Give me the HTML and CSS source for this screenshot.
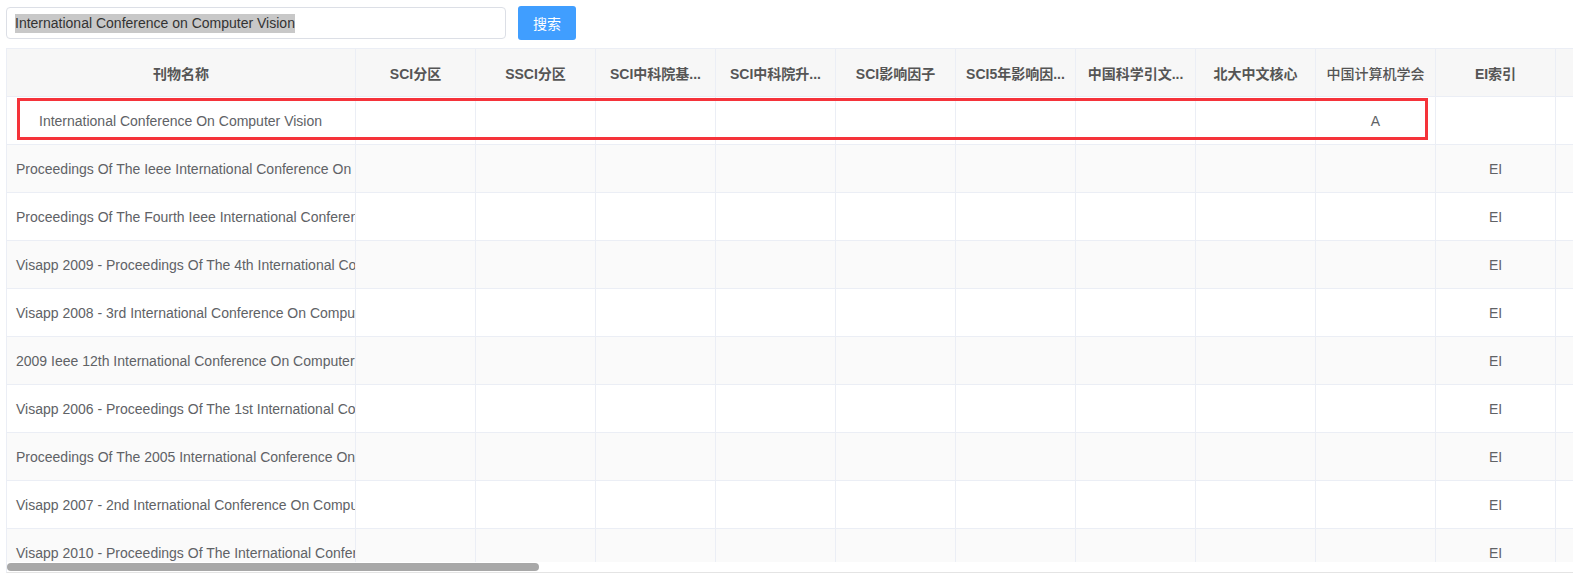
FILE: index.html
```html
<!DOCTYPE html>
<html lang="zh-CN">
<head>
<meta charset="utf-8">
<title>刊物查询</title>
<link rel="stylesheet" href="styles.css">
</head>
<body>
<div class="page">
  <div class="search-bar">
    <div class="search-input"><span class="selected-text">International Conference on Computer Vision</span></div>
    <button class="search-btn" type="button">搜索</button>
  </div>

  <div class="table-wrap">
    <div class="table-scroll">
      <div class="grid header">
        <div class="cell head">刊物名称</div>
        <div class="cell head">SCI分区</div>
        <div class="cell head">SSCI分区</div>
        <div class="cell head">SCI中科院基...</div>
        <div class="cell head">SCI中科院升...</div>
        <div class="cell head">SCI影响因子</div>
        <div class="cell head">SCI5年影响因...</div>
        <div class="cell head">中国科学引文...</div>
        <div class="cell head">北大中文核心</div>
        <div class="cell head light">中国计算机学会</div>
        <div class="cell head">EI索引</div>
        <div class="cell head"></div>
      </div>

      <div class="grid row">
        <div class="cell name indent">International Conference On Computer Vision</div>
        <div class="cell"></div><div class="cell"></div><div class="cell"></div><div class="cell"></div><div class="cell"></div><div class="cell"></div><div class="cell"></div><div class="cell"></div>
        <div class="cell center">A</div>
        <div class="cell"></div><div class="cell"></div>
      </div>
      <div class="grid row striped">
        <div class="cell name">Proceedings Of The Ieee International Conference On Computer Vision</div>
        <div class="cell"></div><div class="cell"></div><div class="cell"></div><div class="cell"></div><div class="cell"></div><div class="cell"></div><div class="cell"></div><div class="cell"></div><div class="cell"></div>
        <div class="cell center">EI</div>
        <div class="cell"></div>
      </div>
      <div class="grid row">
        <div class="cell name">Proceedings Of The Fourth Ieee International Conference On Computer Vision Systems</div>
        <div class="cell"></div><div class="cell"></div><div class="cell"></div><div class="cell"></div><div class="cell"></div><div class="cell"></div><div class="cell"></div><div class="cell"></div><div class="cell"></div>
        <div class="cell center">EI</div>
        <div class="cell"></div>
      </div>
      <div class="grid row striped">
        <div class="cell name">Visapp 2009 - Proceedings Of The 4th International Conference On Computer Vision Theory And Applications</div>
        <div class="cell"></div><div class="cell"></div><div class="cell"></div><div class="cell"></div><div class="cell"></div><div class="cell"></div><div class="cell"></div><div class="cell"></div><div class="cell"></div>
        <div class="cell center">EI</div>
        <div class="cell"></div>
      </div>
      <div class="grid row">
        <div class="cell name">Visapp 2008 - 3rd International Conference On Computer Vision Theory And Applications</div>
        <div class="cell"></div><div class="cell"></div><div class="cell"></div><div class="cell"></div><div class="cell"></div><div class="cell"></div><div class="cell"></div><div class="cell"></div><div class="cell"></div>
        <div class="cell center">EI</div>
        <div class="cell"></div>
      </div>
      <div class="grid row striped">
        <div class="cell name">2009 Ieee 12th International Conference On Computer Vision</div>
        <div class="cell"></div><div class="cell"></div><div class="cell"></div><div class="cell"></div><div class="cell"></div><div class="cell"></div><div class="cell"></div><div class="cell"></div><div class="cell"></div>
        <div class="cell center">EI</div>
        <div class="cell"></div>
      </div>
      <div class="grid row">
        <div class="cell name">Visapp 2006 - Proceedings Of The 1st International Conference On Computer Vision Theory And Applications</div>
        <div class="cell"></div><div class="cell"></div><div class="cell"></div><div class="cell"></div><div class="cell"></div><div class="cell"></div><div class="cell"></div><div class="cell"></div><div class="cell"></div>
        <div class="cell center">EI</div>
        <div class="cell"></div>
      </div>
      <div class="grid row striped">
        <div class="cell name">Proceedings Of The 2005 International Conference On Computer Vision</div>
        <div class="cell"></div><div class="cell"></div><div class="cell"></div><div class="cell"></div><div class="cell"></div><div class="cell"></div><div class="cell"></div><div class="cell"></div><div class="cell"></div>
        <div class="cell center">EI</div>
        <div class="cell"></div>
      </div>
      <div class="grid row">
        <div class="cell name">Visapp 2007 - 2nd International Conference On Computer Vision Theory And Applications</div>
        <div class="cell"></div><div class="cell"></div><div class="cell"></div><div class="cell"></div><div class="cell"></div><div class="cell"></div><div class="cell"></div><div class="cell"></div><div class="cell"></div>
        <div class="cell center">EI</div>
        <div class="cell"></div>
      </div>
      <div class="grid row striped">
        <div class="cell name">Visapp 2010 - Proceedings Of The International Conference On Computer Vision Theory And Applications</div>
        <div class="cell"></div><div class="cell"></div><div class="cell"></div><div class="cell"></div><div class="cell"></div><div class="cell"></div><div class="cell"></div><div class="cell"></div><div class="cell"></div>
        <div class="cell center">EI</div>
        <div class="cell"></div>
      </div>
    </div>
    <div class="scrollbar"><div class="thumb"></div></div>
    <div class="highlight-box"></div>
  </div>
</div>
</body>
</html>
```

FILE: styles.css
```css
* { box-sizing: border-box; }

html, body {
  margin: 0;
  padding: 0;
  background: #ffffff;
}

body {
  font-family: "Liberation Sans", "Noto Sans CJK SC", sans-serif;
  font-size: 14px;
  color: #606266;
  overflow: hidden;
}

.page {
  padding: 6px 0 0 6px;
}

.search-bar {
  display: flex;
  align-items: center;
  gap: 12px;
  height: 34px;
}

.search-input {
  width: 500px;
  height: 32px;
  border: 1px solid #dcdfe6;
  border-radius: 4px;
  padding: 0 8px;
  display: flex;
  align-items: center;
  background: #fff;
}

.selected-text {
  background: #c8c8c8;
  color: #333333;
  line-height: 19px;
  white-space: nowrap;
}

.search-btn {
  width: 58px;
  height: 34px;
  border: none;
  border-radius: 3px;
  background: #409eff;
  color: #ffffff;
  font-family: "Liberation Sans", "Noto Sans CJK SC", sans-serif;
  font-size: 14px;
  padding: 0;
}

.table-wrap {
  position: relative;
  margin-top: 8px;
  border-top: 1px solid #ebeef5;
  border-left: 1px solid #ebeef5;
  border-bottom: 1px solid #e4e4e4;
  overflow: hidden;
}

.table-scroll {
  height: 513px;
  overflow: hidden;
}

.grid {
  display: grid;
  grid-template-columns: 349px repeat(11, 120px);
  width: max-content;
}

.cell {
  height: 48px;
  border-right: 1px solid #ebeef5;
  border-bottom: 1px solid #ebeef5;
  padding: 0 10px;
  display: flex;
  align-items: center;
  white-space: nowrap;
  overflow: hidden;
}

.header .cell {
  background: #f7f7f7;
}

.head {
  justify-content: center;
  font-weight: bold;
  color: #555555;
  text-overflow: ellipsis;
}

.head.light {
  font-weight: 500;
  color: #555555;
}

.row .cell {
  background: #ffffff;
}

.row.striped .cell {
  background: #fafafa;
}

.name {
  padding-left: 9px;
  padding-right: 0;
}

.name.indent {
  padding-left: 32px;
}

.center {
  justify-content: center;
}

.scrollbar {
  height: 10px;
  padding: 1px 0 0 0;
}

.thumb {
  width: 532px;
  height: 8px;
  border-radius: 4px;
  background: #a8a8a8;
}

.highlight-box {
  position: absolute;
  left: 10px;
  top: 49px;
  width: 1411px;
  height: 42px;
  border: 3px solid #f5333a;
}
```
